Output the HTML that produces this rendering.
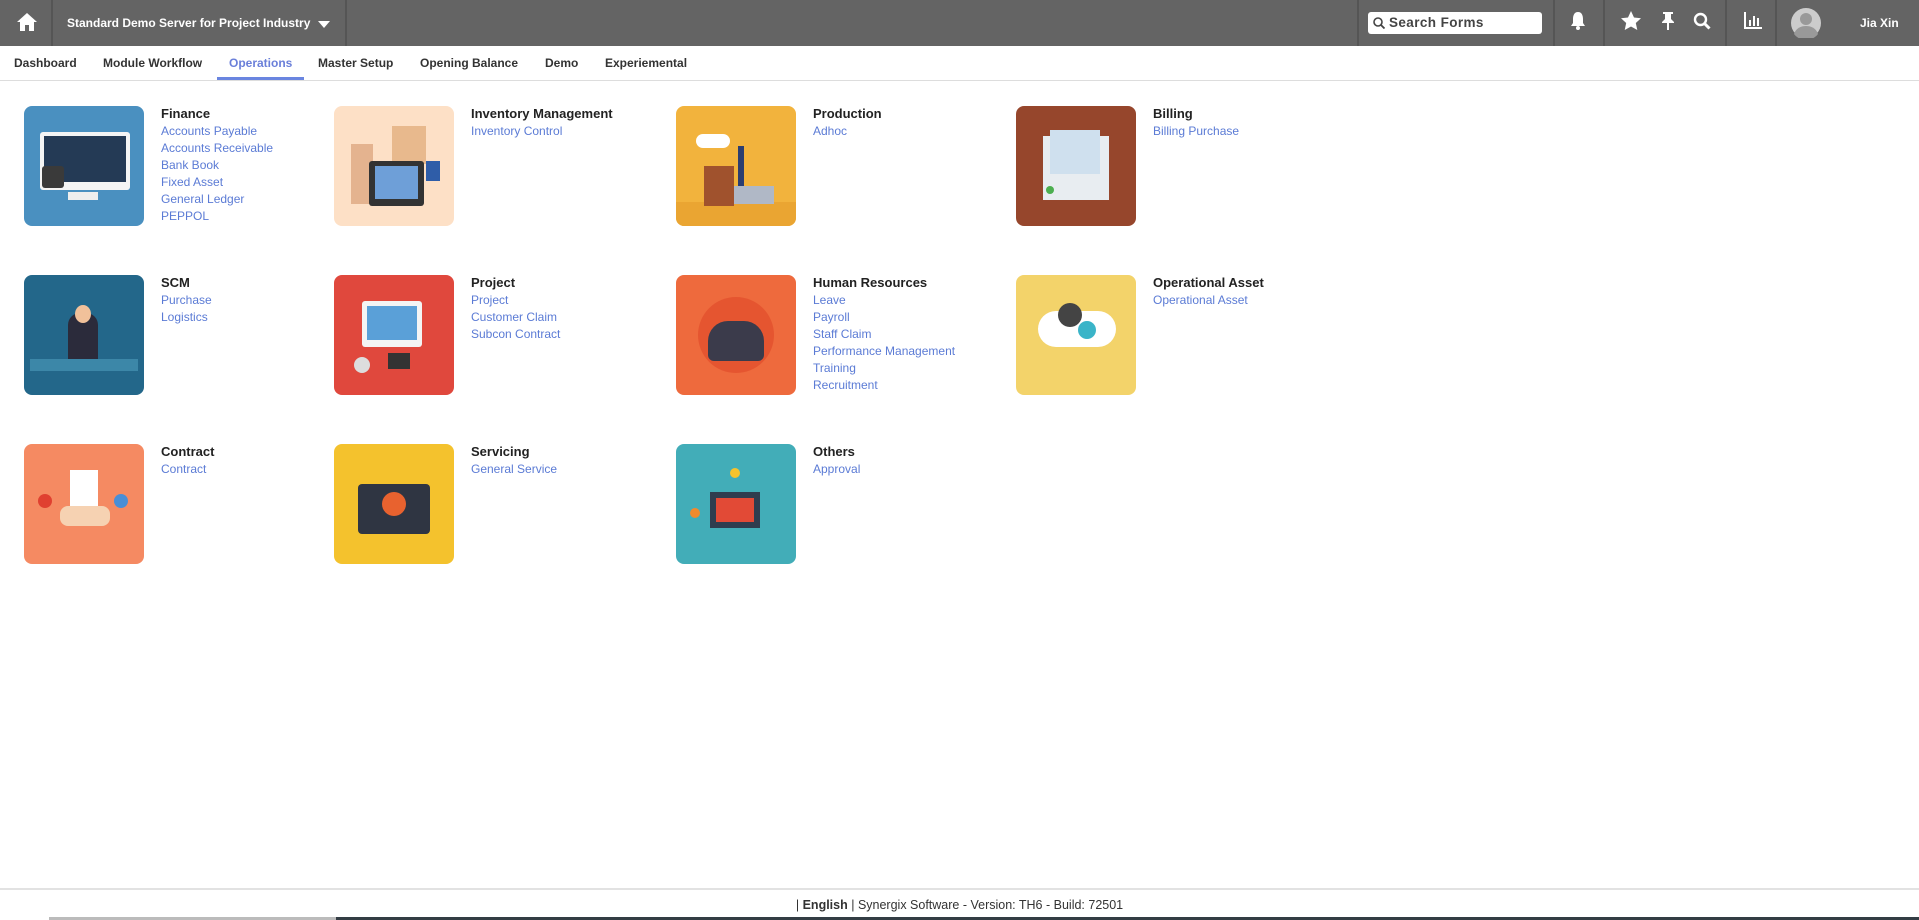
<!DOCTYPE html>
<html><head><meta charset="utf-8"><style>
*{margin:0;padding:0;box-sizing:border-box}
body{width:1919px;height:920px;overflow:hidden;background:#fff;font-family:"Liberation Sans",Arial,sans-serif;position:relative}
.hdr{position:absolute;left:0;top:0;width:1919px;height:46px;background:#646464}
.sep{position:absolute;top:0;width:2px;height:46px;background:#555}
.hdr .t{position:absolute;color:#fff;font-weight:bold;font-size:12px}
.search{position:absolute;left:1368px;top:12px;width:174px;height:22px;background:#fff;border-radius:3px;font-size:13.5px;color:#444;padding:3px 0 0 21px;font-weight:bold;letter-spacing:0.4px}
.nav{position:absolute;top:46px;left:0;width:1919px;height:35px;border-bottom:1px solid #ddd}
.nav span{position:absolute;top:10px;font-size:12px;font-weight:bold;color:#333}
.tile{position:absolute;width:120px;height:120px;border-radius:8px;overflow:hidden}
.grp{position:absolute;font-size:12px;line-height:17px}
.grp b{display:block;font-size:13px;color:#222;margin-bottom:1px}
.grp a{display:block;color:#5b7bd5;text-decoration:none}
.foot{position:absolute;top:888px;left:0;width:1919px;border-top:2px solid #e2e2e2;text-align:center;font-size:12.5px;color:#333;padding-top:8px}
</style></head><body>
<div class="hdr">
 <svg style="position:absolute;left:16px;top:12px" width="22" height="20" viewBox="0 0 22 20"><path d="M11 1L1 10h3v9h5v-6h4v6h5v-9h3z" fill="#fff"/></svg>
 <div class="sep" style="left:51px"></div>
 <div class="t" style="left:67px;top:16px">Standard Demo Server for Project Industry</div>
 <svg style="position:absolute;left:318px;top:21px" width="12" height="8"><path d="M0 0h12L6 7z" fill="#fff"/></svg>
 <div class="sep" style="left:345px"></div>
 <div class="sep" style="left:1357px"></div>
 <div class="search">Search Forms</div>
 <svg style="position:absolute;left:1373px;top:17px" width="12" height="12"><circle cx="5" cy="5" r="4" stroke="#444" stroke-width="1.6" fill="none"/><path d="M8 8l3.5 3.5" stroke="#444" stroke-width="1.8"/></svg>
 <div class="sep" style="left:1553px"></div>
 <svg style="position:absolute;left:1570px;top:11px" width="16" height="20"><path d="M8 1c-4 0-5 4-5 7v4l-2 3h14l-2-3V8c0-3-1-7-5-7z" fill="#fff"/><circle cx="8" cy="17" r="2" fill="#fff"/></svg>
 <div class="sep" style="left:1603px"></div>
 <svg style="position:absolute;left:1621px;top:11px" width="20" height="19" viewBox="0 0 20 19"><path d="M10 0l3 6.5 7 .8-5.2 4.7 1.5 7L10 15.5 3.7 19l1.5-7L0 7.3l7-.8z" fill="#fff"/></svg>
 <svg style="position:absolute;left:1661px;top:11px" width="14" height="20"><path d="M2 1h10v2h-2v5l3 3v1H1v-1l3-3V3H2z" fill="#fff"/><rect x="6" y="12" width="2" height="7" fill="#fff"/></svg>
 <svg style="position:absolute;left:1693px;top:12px" width="18" height="18"><circle cx="7.5" cy="7.5" r="5.5" stroke="#fff" stroke-width="2.4" fill="none"/><path d="M11.5 11.5l5 5" stroke="#fff" stroke-width="3"/></svg>
 <div class="sep" style="left:1725px"></div>
 <svg style="position:absolute;left:1744px;top:12px" width="18" height="17"><path d="M1 0v16h17" stroke="#fff" stroke-width="2" fill="none"/><rect x="5" y="8" width="2" height="6" fill="#fff"/><rect x="9" y="4" width="2" height="10" fill="#fff"/><rect x="13" y="6" width="2" height="8" fill="#fff"/></svg>
 <div class="sep" style="left:1775px"></div>
 <svg style="position:absolute;left:1791px;top:8px" width="30" height="30"><circle cx="15" cy="15" r="15" fill="#ccc"/><circle cx="15" cy="11" r="6" fill="#999"/><path d="M3 26c2-6 7-8 12-8s10 2 12 8a15 15 0 0 1-24 0z" fill="#999"/></svg>
 <div class="t" style="left:1860px;top:16px">Jia Xin</div>
</div>
<div class="nav">
 <span style="left:14px">Dashboard</span>
 <span style="left:103px">Module Workflow</span>
 <span style="left:229px;color:#6a7fd9">Operations</span>
 <div style="position:absolute;left:217px;top:31px;width:87px;height:3px;background:#6a85e0"></div>
 <span style="left:318px">Master Setup</span>
 <span style="left:420px">Opening Balance</span>
 <span style="left:545px">Demo</span>
 <span style="left:605px">Experiemental</span>
</div>

<div class="tile" style="left:24px;top:106px;background:#4a90c0"><div style="position:absolute;left:16px;top:26px;width:90px;height:58px;background:#f4f4f4;border-radius:3px"></div><div style="position:absolute;left:20px;top:30px;width:82px;height:46px;background:#243a55"></div><div style="position:absolute;left:18px;top:60px;width:22px;height:22px;background:#3a3a3a;border-radius:3px"></div><div style="position:absolute;left:44px;top:86px;width:30px;height:8px;background:#eee"></div></div>
<div class="grp" style="left:161px;top:105px"><b>Finance</b><a>Accounts Payable</a><a>Accounts Receivable</a><a>Bank Book</a><a>Fixed Asset</a><a>General Ledger</a><a>PEPPOL</a></div>

<div class="tile" style="left:334px;top:106px;background:#fde0c6"><div style="position:absolute;left:17px;top:38px;width:22px;height:60px;background:#e4b38f"></div><div style="position:absolute;left:58px;top:20px;width:34px;height:38px;background:#e8b98d"></div><div style="position:absolute;left:35px;top:55px;width:55px;height:45px;background:#333;border-radius:3px"></div><div style="position:absolute;left:41px;top:60px;width:43px;height:33px;background:#6e9fd8"></div><div style="position:absolute;left:92px;top:55px;width:14px;height:20px;background:#2f5da8"></div></div>
<div class="grp" style="left:471px;top:105px"><b>Inventory Management</b><a>Inventory Control</a></div>

<div class="tile" style="left:676px;top:106px;background:#f2b33d"><div style="position:absolute;left:0;top:96px;width:120px;height:24px;background:#eaa532"></div><div style="position:absolute;left:28px;top:60px;width:30px;height:40px;background:#a0522d"></div><div style="position:absolute;left:62px;top:40px;width:6px;height:55px;background:#2c3e70"></div><div style="position:absolute;left:58px;top:80px;width:40px;height:18px;background:#b0b8c6"></div><div style="position:absolute;left:20px;top:28px;width:34px;height:14px;background:#fff;border-radius:8px"></div></div>
<div class="grp" style="left:813px;top:105px"><b>Production</b><a>Adhoc</a></div>

<div class="tile" style="left:1016px;top:106px;background:#96462c"><div style="position:absolute;left:27px;top:30px;width:66px;height:64px;background:#e8edf1"></div><div style="position:absolute;left:34px;top:24px;width:50px;height:44px;background:#cfe0ee"></div><div style="position:absolute;left:30px;top:80px;width:8px;height:8px;background:#4caf50;border-radius:50%"></div></div>
<div class="grp" style="left:1153px;top:105px"><b>Billing</b><a>Billing Purchase</a></div>

<div class="tile" style="left:24px;top:275px;background:#23678a"><div style="position:absolute;left:44px;top:38px;width:30px;height:50px;background:#2b2b3b;border-radius:12px 12px 0 0"></div><div style="position:absolute;left:51px;top:30px;width:16px;height:18px;background:#f1c19a;border-radius:50%"></div><div style="position:absolute;left:6px;top:84px;width:108px;height:12px;background:#3c87a8"></div></div>
<div class="grp" style="left:161px;top:274px"><b>SCM</b><a>Purchase</a><a>Logistics</a></div>

<div class="tile" style="left:334px;top:275px;background:#e0483d"><div style="position:absolute;left:28px;top:26px;width:60px;height:46px;background:#f4f4f4;border-radius:3px"></div><div style="position:absolute;left:33px;top:31px;width:50px;height:34px;background:#5aa0d8"></div><div style="position:absolute;left:20px;top:82px;width:16px;height:16px;background:#ddd;border-radius:50%"></div><div style="position:absolute;left:54px;top:78px;width:22px;height:16px;background:#333"></div></div>
<div class="grp" style="left:471px;top:274px"><b>Project</b><a>Project</a><a>Customer Claim</a><a>Subcon Contract</a></div>

<div class="tile" style="left:676px;top:275px;background:#ee6a3d"><div style="position:absolute;left:22px;top:22px;width:76px;height:76px;background:#e55530;border-radius:50%"></div><div style="position:absolute;left:32px;top:46px;width:56px;height:40px;background:#3b3b4b;border-radius:20px 20px 6px 6px"></div></div>
<div class="grp" style="left:813px;top:274px"><b>Human Resources</b><a>Leave</a><a>Payroll</a><a>Staff Claim</a><a>Performance Management</a><a>Training</a><a>Recruitment</a></div>

<div class="tile" style="left:1016px;top:275px;background:#f3d36a"><div style="position:absolute;left:22px;top:36px;width:78px;height:36px;background:#fff;border-radius:18px"></div><div style="position:absolute;left:42px;top:28px;width:24px;height:24px;background:#444;border-radius:50%"></div><div style="position:absolute;left:62px;top:46px;width:18px;height:18px;background:#3ab4c8;border-radius:50%"></div></div>
<div class="grp" style="left:1153px;top:274px"><b>Operational Asset</b><a>Operational Asset</a></div>

<div class="tile" style="left:24px;top:444px;background:#f58a62"><div style="position:absolute;left:46px;top:26px;width:28px;height:36px;background:#fff"></div><div style="position:absolute;left:36px;top:62px;width:50px;height:20px;background:#f6d2b2;border-radius:8px"></div><div style="position:absolute;left:14px;top:50px;width:14px;height:14px;background:#e04030;border-radius:50%"></div><div style="position:absolute;left:90px;top:50px;width:14px;height:14px;background:#4a8ed6;border-radius:50%"></div></div>
<div class="grp" style="left:161px;top:443px"><b>Contract</b><a>Contract</a></div>

<div class="tile" style="left:334px;top:444px;background:#f4c22d"><div style="position:absolute;left:24px;top:40px;width:72px;height:50px;background:#2f3542;border-radius:4px"></div><div style="position:absolute;left:48px;top:48px;width:24px;height:24px;background:#e8622f;border-radius:50%"></div></div>
<div class="grp" style="left:471px;top:443px"><b>Servicing</b><a>General Service</a></div>

<div class="tile" style="left:676px;top:444px;background:#42adb8"><div style="position:absolute;left:34px;top:48px;width:50px;height:36px;background:#2f3d4f"></div><div style="position:absolute;left:40px;top:54px;width:38px;height:24px;background:#e24a36"></div><div style="position:absolute;left:14px;top:64px;width:10px;height:10px;background:#f08a2c;border-radius:50%"></div><div style="position:absolute;left:54px;top:24px;width:10px;height:10px;background:#f5c32c;border-radius:50%"></div></div>
<div class="grp" style="left:813px;top:443px"><b>Others</b><a>Approval</a></div>

<div class="foot">| <b>English</b> | Synergix Software - Version: TH6 - Build: 72501</div>
<div style="position:absolute;left:49px;top:917px;width:1870px;height:3px;background:#333d44"></div>
<div style="position:absolute;left:49px;top:917px;width:287px;height:3px;background:#bbb"></div>
</body></html>
